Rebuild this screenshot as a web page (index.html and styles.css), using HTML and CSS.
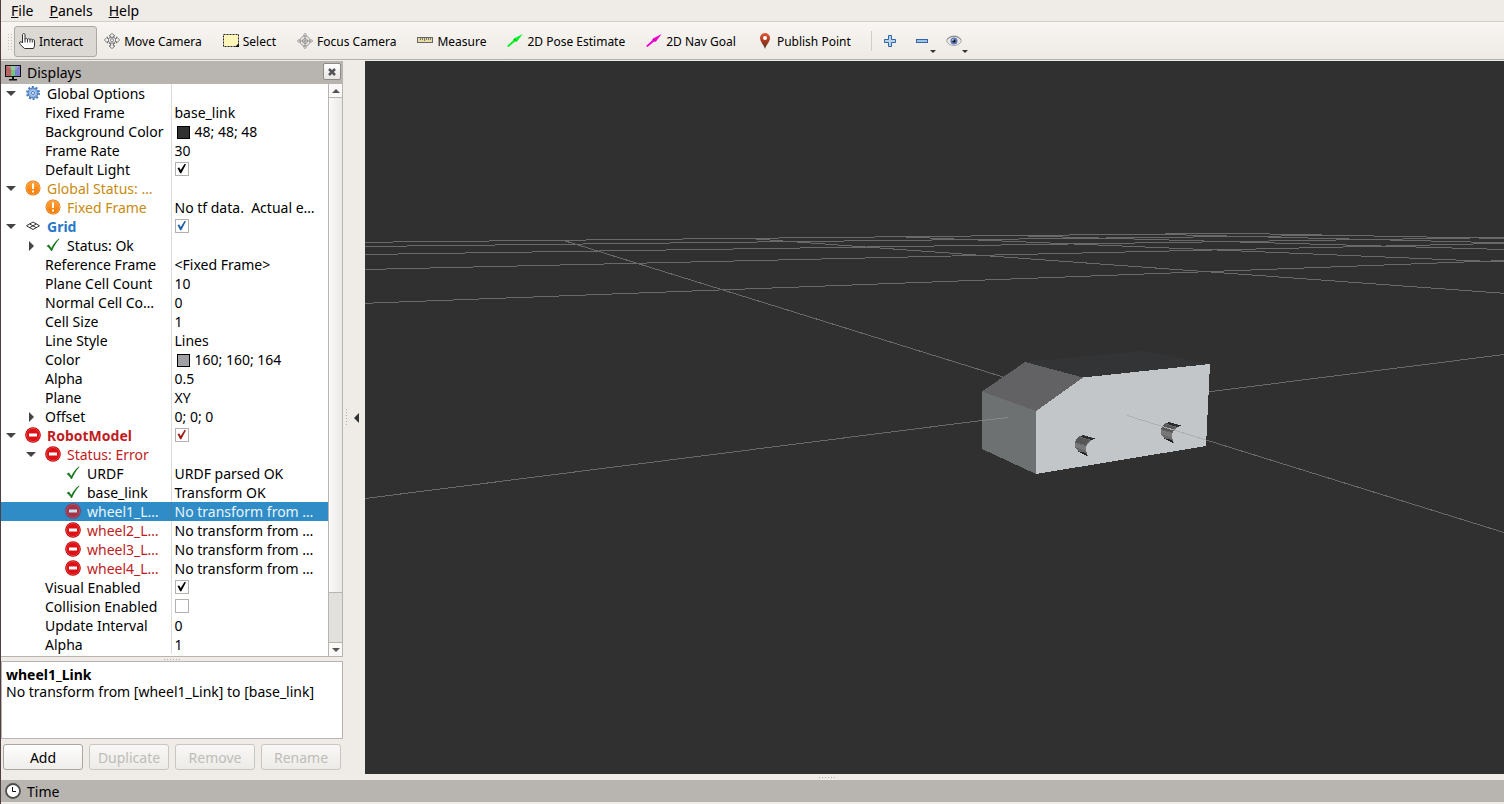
FILE: index.html
```
<!DOCTYPE html>
<html lang="en">
<head>
  <meta charset="UTF-8">
  <title>RViz</title>
  <link rel="stylesheet" href="styles.css">
</head>
<body>

  <!-- Icon sprites -->
  <svg class="sprites" aria-hidden="true">
    <defs>
      <linearGradient id="orange" x1="0" y1="0" x2="0" y2="1">
        <stop offset="0" stop-color="#ffa23a"/><stop offset="1" stop-color="#f57900"/>
      </linearGradient>
      <linearGradient id="pin" x1="0" y1="0" x2="0" y2="1">
        <stop offset="0" stop-color="#e8583a"/><stop offset=".5" stop-color="#a83a20"/><stop offset="1" stop-color="#4a3a20"/>
      </linearGradient>
    </defs>
    <symbol id="i-error" viewBox="0 0 16 16">
      <circle cx="8" cy="8" r="7.8" fill="#c00000"/>
      <circle cx="8" cy="8" r="6.6" fill="#dd1016" stroke="#ee6a6a" stroke-width=".6"/>
      <rect x="4" y="6.500" width="8" height="3" fill="#fff"/>
    </symbol>
    <symbol id="i-error-sel" viewBox="0 0 16 16">
      <circle cx="8" cy="8" r="7.800" fill="#93304a"/>
      <circle cx="8" cy="8" r="6.600" fill="#a43347" stroke="#b06a80" stroke-width=".6"/>
      <rect x="4" y="6.500" width="8" height="3" fill="#c8dff0"/>
    </symbol>
    <symbol id="i-warn" viewBox="0 0 16 16">
      <circle cx="8" cy="8" r="7.500" fill="#d86a00"/>
      <circle cx="8" cy="8" r="6.500" fill="url(#orange)" stroke="#ffb766" stroke-width=".7"/>
      <path d="M7 3.500h2v5.500h-2zM7 10.500h2v2h-2z" fill="#fff"/>
    </symbol>
    <symbol id="i-ok" viewBox="0 0 16 16">
      <path d="M1.500 9l2.500-1.500 2.300 3.500C8 7.500 10.500 4 14 1.500l.5.500C11 5.500 9 9.500 7 14H6C5 12 3.500 10 1.500 9z" fill="#1b7a22"/>
    </symbol>
    <symbol id="i-gear" viewBox="0 0 16 16">
      <circle cx="8" cy="8" r="5" fill="#a5c4e8" stroke="#3d6fb5"/>
      <circle cx="8" cy="8" r="6" fill="none" stroke="#4a7cc0" stroke-width="2" stroke-dasharray="2 1.770"/>
      <circle cx="8" cy="8" r="4" fill="none" stroke="#5d8fce" stroke-dasharray="1 1"/>
      <circle cx="8" cy="8" r="1.500" fill="#fff" stroke="#4a7cc0"/>
    </symbol>
    <symbol id="i-grid" viewBox="0 0 16 16">
      <path d="M1.500 7.800L8 4l6.500 3.800L8 11.500zM4.700 5.900l6.600 3.800M11.300 5.900l-6.600 3.800" fill="none" stroke="#333"/>
    </symbol>
    <symbol id="i-screen" viewBox="0 0 16 16">
      <rect x="0" y="0" width="16" height="12" fill="#111"/>
      <rect x="1" y="1" width="5" height="10" fill="#b86064"/>
      <rect x="6" y="1" width="4" height="10" fill="#72c47a"/>
      <rect x="10" y="1" width="5" height="10" fill="#8080d0"/>
      <path d="M1 1h14L9 6z" fill="#fff" opacity=".2"/>
      <path d="M7 12h2v2h3v1.500H4V14h3z" fill="#111"/>
    </symbol>
    <symbol id="i-clock" viewBox="0 0 16 16">
      <circle cx="8" cy="8" r="7" fill="#fff" stroke="#4d4d4d" stroke-width="1.800"/>
      <path d="M7.500 4v4.500H11" fill="none" stroke="#111"/>
    </symbol>
    <symbol id="i-hand" viewBox="0 0 16 16">
      <path d="M3.500 10V2c0-2 2.500-2 2.500 0v4.500c0-1.500 2.500-1.500 2.500.3 0-1.500 2.500-1.500 2.500.3 0-1.500 2.300-1.500 2.300.3 0-1.200 2.200-1.200 2.200.5V13l-1 2.500h-9L.8 11V9c.7-.8 1.600-.5 2.700 1zM6 6.500v3M8.500 7v2.500M11 7v2.500M13.300 7.500v2" fill="#fff" stroke="#333"/>
    </symbol>
    <symbol id="i-move" viewBox="0 0 16 16">
      <g fill="#f4f2f0" stroke="#666" stroke-width=".8">
        <path d="M8 .4l3 2.600H9.300v2.500H12.500V3.800L15.600 7l-3.100 3.200V8.500H9.300v4.500H11L8 15.600 5 13h1.700V8.500H3.500v1.700L.4 7l3.100-3.200v1.700h3.200V3H5z"/>
        <rect x="4.500" y="4.500" width="7" height="5.500" rx="2"/>
        <circle cx="8" cy="7.200" r="1.600"/>
        <path d="M5 10l2 2M11 10l-2 2"/>
      </g>
    </symbol>
    <symbol id="i-select" viewBox="0 0 16 16">
      <rect x=".5" y="1.500" width="15" height="12" fill="#fdf6b8" stroke="#222" stroke-dasharray="2 1"/>
      <path d="M12 14h4v-4z" fill="#111"/>
    </symbol>
    <symbol id="i-focus" viewBox="0 0 16 16">
      <g fill="none" stroke="#888" stroke-width=".9">
        <circle cx="8" cy="8" r="5"/>
        <circle cx="8" cy="8" r="2.500"/>
        <path d="M7 3V1.500L8 .3l1 1.200V3M7 13v1.500l1 1.200 1-1.200V13M3 7H1.500L.3 8l1.200 1H3M13 7h1.500l1.200 1-1.200 1H13"/>
        <path d="M8 3v10M3 8h10"/>
      </g>
    </symbol>
    <symbol id="i-ruler" viewBox="0 0 16 16">
      <rect x=".5" y="4.500" width="15" height="5" fill="#e8dca0" stroke="#666"/>
      <path d="M3.500 5v2M5.500 5v2M7.500 5v3M9.500 5v2M11.500 5v2M13.500 5v2" stroke="#777"/>
    </symbol>
    <symbol id="i-arrow" viewBox="0 0 16 16">
      <path d="M0 13l5.500-5L7 5.500 15.700 1 10 8.500 7.800 8.800 1.500 14z" fill="currentColor"/>
      <path d="M7 6.200l2.500 1.800" stroke="#222" stroke-opacity=".4"/>
    </symbol>
    <symbol id="i-pin" viewBox="0 0 16 16">
      <path d="M8 16C7 12 3 9 3 5a5 5 0 0 1 10 0c0 4-4 7-5 11z" fill="url(#pin)"/>
      <circle cx="8" cy="5" r="2" fill="#fff"/>
    </symbol>
    <symbol id="i-plus" viewBox="0 0 16 16">
      <path d="M6.500 2.500h3v4h4v3h-4v4h-3v-4h-4v-3h4z" fill="#b8d3ee" stroke="#3465a4"/>
    </symbol>
    <symbol id="i-minus" viewBox="0 0 16 16">
      <rect x="2.500" y="6.500" width="11" height="3" fill="#9fc3e8" stroke="#3465a4"/>
    </symbol>
    <symbol id="i-eye" viewBox="0 0 16 16">
      <path d="M.5 8C3 2 13 2 15.500 8 13 14 3 14 .5 8z" fill="#e8e8e8" stroke="#aaa"/>
      <path d="M1 6.500C4 2 12 2 15 6.500" fill="none" stroke="#888"/>
      <circle cx="8" cy="8" r="3.500" fill="#5f7ab8"/>
      <circle cx="8" cy="8" r="1.600" fill="#111"/>
      <circle cx="7" cy="7" r=".8" fill="#fff"/>
    </symbol>
  </svg>

  <nav class="menubar">
    <button class="menu-item"><u>F</u>ile</button>
    <button class="menu-item"><u>P</u>anels</button>
    <button class="menu-item"><u>H</u>elp</button>
  </nav>

  <div class="toolbar">
    <span class="grip"></span>
    <button class="tool active"><svg class="icon"><use href="#i-hand"/></svg>Interact</button>
    <button class="tool"><svg class="icon"><use href="#i-move"/></svg>Move Camera</button>
    <button class="tool"><svg class="icon"><use href="#i-select"/></svg>Select</button>
    <button class="tool"><svg class="icon"><use href="#i-focus"/></svg>Focus Camera</button>
    <button class="tool"><svg class="icon"><use href="#i-ruler"/></svg>Measure</button>
    <button class="tool"><svg class="icon green"><use href="#i-arrow"/></svg>2D Pose Estimate</button>
    <button class="tool"><svg class="icon pink"><use href="#i-arrow"/></svg>2D Nav Goal</button>
    <button class="tool"><svg class="icon"><use href="#i-pin"/></svg>Publish Point</button>
    <span class="separator"></span>
    <button class="tool small" aria-label="Add tool"><svg class="icon"><use href="#i-plus"/></svg></button>
    <button class="tool small drop" aria-label="Remove tool"><svg class="icon"><use href="#i-minus"/></svg></button>
    <button class="tool small drop" aria-label="Visibility"><svg class="icon"><use href="#i-eye"/></svg></button>
  </div>

  <main class="workspace">
    <aside class="displays">
      <header class="dock-title">
        <svg class="icon"><use href="#i-screen"/></svg>
        <span>Displays</span>
        <button class="close" aria-label="Close">
          <svg viewBox="0 0 8 8"><path d="M1 1l6 6M7 1L1 7" stroke="#555" stroke-width="2.500"/></svg>
        </button>
      </header>

      <div class="tree">
        <table class="properties">
          <colgroup><col class="name-col"><col></colgroup>
          <tbody>
            <tr><td class="l0"><div><i class="open"></i><svg class="icon"><use href="#i-gear"/></svg>Global Options</div></td><td></td></tr>
            <tr><td class="l1"><div>Fixed Frame</div></td><td>base_link</td></tr>
            <tr><td class="l1"><div>Background Color</div></td><td><span class="swatch dark"></span>48; 48; 48</td></tr>
            <tr><td class="l1"><div>Frame Rate</div></td><td>30</td></tr>
            <tr><td class="l1"><div><label for="light">Default Light</label></div></td><td><input type="checkbox" id="light" checked></td></tr>
            <tr class="warn"><td class="l0"><div><i class="open"></i><svg class="icon"><use href="#i-warn"/></svg>Global Status: …</div></td><td></td></tr>
            <tr class="warn"><td class="l1"><div><svg class="icon"><use href="#i-warn"/></svg>Fixed Frame</div></td><td>No tf data.&nbsp; Actual e…</td></tr>
            <tr class="blue"><td class="l0"><div><i class="open"></i><svg class="icon"><use href="#i-grid"/></svg><label for="grid">Grid</label></div></td><td><input type="checkbox" id="grid" checked></td></tr>
            <tr><td class="l1x"><div><i class="closed"></i><svg class="icon"><use href="#i-ok"/></svg>Status: Ok</div></td><td></td></tr>
            <tr><td class="l1"><div>Reference Frame</div></td><td>&lt;Fixed Frame&gt;</td></tr>
            <tr><td class="l1"><div>Plane Cell Count</div></td><td>10</td></tr>
            <tr><td class="l1"><div>Normal Cell Co…</div></td><td>0</td></tr>
            <tr><td class="l1"><div>Cell Size</div></td><td>1</td></tr>
            <tr><td class="l1"><div>Line Style</div></td><td>Lines</td></tr>
            <tr><td class="l1"><div>Color</div></td><td><span class="swatch grey"></span>160; 160; 164</td></tr>
            <tr><td class="l1"><div>Alpha</div></td><td>0.5</td></tr>
            <tr><td class="l1"><div>Plane</div></td><td>XY</td></tr>
            <tr><td class="l1x"><div><i class="closed"></i>Offset</div></td><td>0; 0; 0</td></tr>
            <tr class="red bold"><td class="l0"><div><i class="open"></i><svg class="icon"><use href="#i-error"/></svg><label for="robot">RobotModel</label></div></td><td><input type="checkbox" id="robot" checked></td></tr>
            <tr class="red"><td class="l1x"><div><i class="open"></i><svg class="icon"><use href="#i-error"/></svg>Status: Error</div></td><td></td></tr>
            <tr><td class="l2"><div><svg class="icon"><use href="#i-ok"/></svg>URDF</div></td><td>URDF parsed OK</td></tr>
            <tr><td class="l2"><div><svg class="icon"><use href="#i-ok"/></svg>base_link</div></td><td>Transform OK</td></tr>
            <tr class="selected"><td class="l2"><div><svg class="icon"><use href="#i-error-sel"/></svg>wheel1_L…</div></td><td>No transform from …</td></tr>
            <tr class="red"><td class="l2"><div><svg class="icon"><use href="#i-error"/></svg>wheel2_L…</div></td><td>No transform from …</td></tr>
            <tr class="red"><td class="l2"><div><svg class="icon"><use href="#i-error"/></svg>wheel3_L…</div></td><td>No transform from …</td></tr>
            <tr class="red"><td class="l2"><div><svg class="icon"><use href="#i-error"/></svg>wheel4_L…</div></td><td>No transform from …</td></tr>
            <tr><td class="l1"><div><label for="visual">Visual Enabled</label></div></td><td><input type="checkbox" id="visual" checked></td></tr>
            <tr><td class="l1"><div><label for="collision">Collision Enabled</label></div></td><td><input type="checkbox" id="collision"></td></tr>
            <tr><td class="l1"><div>Update Interval</div></td><td>0</td></tr>
            <tr><td class="l1"><div>Alpha</div></td><td>1</td></tr>
          </tbody>
        </table>
        <div class="scrollbar">
          <button class="scroll-btn up" aria-label="Scroll up"></button>
          <div class="thumb"></div>
          <div class="track"></div>
          <button class="scroll-btn down" aria-label="Scroll down"></button>
        </div>
      </div>

      <div class="splitter"><span class="dots"></span></div>

      <div class="description">
        <b>wheel1_Link</b>
        <p>No transform from [wheel1_Link] to [base_link]</p>
      </div>

      <div class="actions">
        <button>Add</button>
        <button disabled>Duplicate</button>
        <button disabled>Remove</button>
        <button disabled>Rename</button>
      </div>
    </aside>

    <div class="collapse">
      <span class="dots vertical"></span>
      <button class="collapse-btn" aria-label="Hide left panel"></button>
    </div>

    <section class="viewport">
      <svg viewBox="365 61 1139 713" preserveAspectRatio="xMidYMid slice" shape-rendering="crispEdges" role="img" aria-label="3D view">
        <!-- ground grid -->
        <g stroke="#6a6a6c" fill="none">
          <path d="M365 498.500L1504 354.500"/>
          <path d="M365 303.300L1504 260.500"/>
          <path d="M365 269.500L1504 243.300"/>
          <path d="M365 254.500L1504 237.500"/>
          <path d="M365 246.500L1325 235.500"/>
          <path d="M365 242.300L1233 233.300"/>
          <path d="M1233 233.300L1504 238.500"/>
          <path d="M1153 234.200L1504 242.800"/>
          <path d="M1010 235.500L1504 249.500"/>
          <path d="M899 236.700L1504 262"/>
          <path d="M746 238.300L1504 293.300"/>
          <path d="M563 240.300L1504 532.500"/>
        </g>
        <!-- robot body -->
        <path d="M1025 362L1143 351 1210 364 1083 378z" fill="#333436"/>
        <path d="M982 391.500L1025 362 1083 377.500 1036 411z" fill="#626264"/>
        <path d="M982 391.500L1036 411V474L982 449z" fill="#6d7171"/>
        <path d="M1036 411L1083 377.500 1210 364 1206 446 1036 474z" fill="#c3c6c9"/>
        <path d="M982 420.500L1008 417.500" stroke="#858889"/>
        <!-- wheels -->
        <g id="wheel">
          <path d="M1083 435L1095 438.500 1091 440 1088 443 1086 447V451L1088 456 1079 452 1075 448V442L1078 437z" fill="#666768"/>
          <path d="M1075 442l3-5 11 3-3 5z" fill="#555657"/>
          <path d="M1075 443l11 3v5l-11-4z" fill="#777879"/>
          <path d="M1082 435l13 3.500-3 1.500-11-3z" fill="#2c2c2c"/>
          <path d="M1077 451l9 2 1.500 3z" fill="#222"/>
        </g>
        <use href="#wheel" x="86" y="-13"/>
        <path d="M1127 415.500L1206 440" stroke="#adb0b3"/>
      </svg>
    </section>
  </main>

  <div class="splitter bottom"><span class="dots"></span></div>
  <footer class="dock-title time">
    <svg class="icon"><use href="#i-clock"/></svg>
    <span>Time</span>
  </footer>

</body>
</html>
```
FILE: styles.css
```
* {
  box-sizing: border-box;
}

body {
  margin: 0;
  height: 100vh;
  display: flex;
  flex-direction: column;
  overflow: hidden;
  padding-bottom: 2px;
  border-left: 1px solid #4f3e42;
  background-color: #efebe7;
  color: #000;
  font-family: "Noto Sans", "Open Sans", sans-serif;
  font-size: 14px;
  line-height: 19px;
}

button {
  font: inherit;
  color: inherit;
  border: none;
  background: none;
  padding: 0;
}

.sprites {
  position: absolute;
  width: 0;
  height: 0;
}

.icon {
  width: 16px;
  height: 16px;
  flex: none;
}

/* Menu bar */
.menubar {
  display: flex;
  gap: 16px;
  height: 22px;
  padding-left: 10px;
  border-bottom: 1px solid #d3d0cb;
}

.menu-item {
  height: 21px;
}

/* Toolbar */
.toolbar {
  display: flex;
  align-items: center;
  gap: 2px;
  height: 38px;
  padding: 1px 0 0 6px;
  border-bottom: 1px solid #b5b1ac;
  background: linear-gradient(#f8f5f2, #eeebe6);
  font-size: 12px;
}

.grip {
  width: 5px;
  height: 17px;
  background: radial-gradient(circle, #c4c0bc 1px, transparent 1px) 0 0 / 3px 3px;
}

.tool {
  display: flex;
  align-items: center;
  gap: 4px;
  height: 31px;
  padding: 0 13px 0 4px;
  border: 1px solid transparent;
  border-radius: 3px;
  white-space: nowrap;
}

.tool.active {
  background-color: #dcd9d5;
  border-color: #aca8a4;
}

.green {
  color: #00f020;
}

.pink {
  color: #f000d0;
}

.separator {
  width: 1px;
  height: 20px;
  margin: 0 4px;
  background-color: #d0ccc8;
}

.tool.small {
  padding: 0 9px 0 3px;
  gap: 0;
}

.tool.drop {
  padding-right: 0;
}

.tool.drop::after {
  content: "";
  align-self: flex-end;
  margin-bottom: 3px;
  border: 3px solid transparent;
  border-top-color: #333;
  border-bottom: none;
}

.tool.drop + .drop {
  margin-left: 3px;
}

/* Main area */
.workspace {
  flex: 1;
  min-height: 0;
  display: flex;
  padding-top: 1px;
}

.displays {
  width: 342px;
  flex: none;
  display: flex;
  flex-direction: column;
}

.dock-title {
  display: flex;
  align-items: center;
  gap: 6px;
  height: 22px;
  flex: none;
  padding: 0 2px 0 4px;
  background-color: #b8b4b0;
}

.displays .dock-title {
  height: 23px;
}

.close {
  display: grid;
  place-items: center;
  width: 18px;
  height: 17px;
  margin: 0 0 2px auto;
  border: 1px solid #8e8a86;
  border-radius: 2px;
  background: linear-gradient(#fff, #e8e6e3);
}

.close svg {
  width: 8px;
  height: 8px;
}

/* Property tree */
.tree {
  flex: 1;
  min-height: 0;
  display: flex;
  background-color: #fff;
  border: solid #b8b4b0;
  border-width: 0 1px 1px 0;
}

.properties {
  flex: 1;
  height: 570px;
  min-width: 0;
  border-collapse: collapse;
  table-layout: fixed;
}

.name-col {
  width: 170px;
}

.properties tr {
  height: 19px;
}

.properties td {
  height: 19px;
  padding: 0;
  overflow: hidden;
  white-space: nowrap;
}

.properties td + td {
  padding-left: 3px;
}

.properties td:first-child {
  border-right: 1px solid #dcdcdc;
}

.properties td > div {
  display: flex;
  align-items: center;
  height: 19px;
}

.properties .icon {
  margin: 0 6px 2px 0;
}

.l0 {
  --indent: 4px;
}

.l1x {
  --indent: 24px;
}

.l1 {
  --indent: 44px;
}

.l2 {
  --indent: 64px;
}

.properties td > div {
  padding-left: var(--indent);
}

.open,
.closed {
  display: grid;
  place-items: center;
  width: 20px;
  padding-right: 8px;
  flex: none;
}

.open::before {
  content: "";
  border: 5px solid transparent;
  border-top-color: #444;
  border-bottom: none;
}

.closed::before {
  content: "";
  border: 5px solid transparent;
  border-left: 5px solid #444;
  border-right: none;
}

.warn td:first-child {
  color: #c88a10;
}

.blue td:first-child {
  color: #2878c8;
  font-weight: bold;
}

.red td:first-child {
  color: #c01c22;
}

.bold td:first-child {
  font-weight: bold;
}

.selected td {
  background-color: #308cc6;
  color: #e8f4fc;
}

.properties .selected td:first-child {
  border-right-color: #4a80a8;
}

input[type="checkbox"] {
  appearance: none;
  display: block;
  width: 14px;
  height: 14px;
  margin: 0 0 2px;
  border: 1px solid #b4b0ac;
  background-color: #fff;
  color: #000;
}

input[type="checkbox"]:checked::before {
  content: "";
  display: block;
  width: 10px;
  height: 10px;
  margin: 1px;
  background-color: currentColor;
  clip-path: polygon(10% 45%, 28% 40%, 42% 66%, 80% 5%, 95% 8%, 48% 98%, 36% 98%);
}

.blue input[type="checkbox"] {
  color: #2060a0;
}

.red input[type="checkbox"] {
  color: #a01818;
}

.swatch {
  display: inline-block;
  width: 13px;
  height: 13px;
  margin: 0 5px 0 2px;
  border: 1px solid #000;
  vertical-align: -2px;
}

.swatch.dark {
  background-color: #303030;
}

.swatch.grey {
  background-color: #a0a0a4;
}

/* Scroll bar */
.scrollbar {
  display: flex;
  flex-direction: column;
  width: 14px;
  flex: none;
  border-left: 1px solid #b8b4b0;
}

.scroll-btn {
  display: grid;
  place-items: center;
  height: 13px;
  flex: none;
  background-color: #faf9f8;
}

.scroll-btn::before {
  content: "";
  border: 4px solid transparent;
}

.up::before {
  border-bottom-color: #555;
  border-top: none;
}

.down::before {
  border-top-color: #555;
  border-bottom: none;
}

.thumb {
  flex: 10;
  border: solid #b8b4b0;
  border-width: 1px 0;
  background: linear-gradient(to right, #fbfaf9, #ebe9e6);
}

.track {
  flex: 1;
  border-bottom: 1px solid #b8b4b0;
  background-color: #e2e0dc;
}

/* Splitter handles */
.splitter {
  display: grid;
  place-items: center;
  height: 4px;
  flex: none;
}

.splitter.bottom {
  height: 6px;
  padding-left: 10%;
}

.dots {
  width: 17px;
  height: 1px;
  background: repeating-linear-gradient(to right, #b0aca8 0 1px, transparent 1px 3px);
}

.dots.vertical {
  width: 1px;
  height: 17px;
  background: repeating-linear-gradient(#b0aca8 0 1px, transparent 1px 3px);
}

.description {
  height: 78px;
  flex: none;
  padding: 4px;
  border: 1px solid #b8b4b0;
  background-color: #fff;
  line-height: 17px;
}

.description p {
  margin: 0;
  white-space: nowrap;
}

.actions {
  display: flex;
  gap: 6px;
  padding: 5px 2px 4px;
}

.actions button {
  flex: 1;
  height: 26px;
  border: 1px solid #aaa6a2;
  border-radius: 3px;
  background: linear-gradient(#fefefe, #efedea);
}

.actions button:disabled {
  color: #bfbcb9;
  border-color: #c8c5c2;
  background: linear-gradient(#f8f7f5, #edebe8);
}

.collapse {
  display: flex;
  align-items: center;
  gap: 7px;
  width: 22px;
  padding-left: 3px;
  flex: none;
}

.collapse-btn {
  border: 5px solid transparent;
  border-right-color: #333;
  border-left: none;
}

/* 3D view */
.viewport {
  flex: 1;
  min-width: 0;
  background-color: #303030;
}

.viewport svg {
  display: block;
  width: 100%;
  height: 100%;
}
```
